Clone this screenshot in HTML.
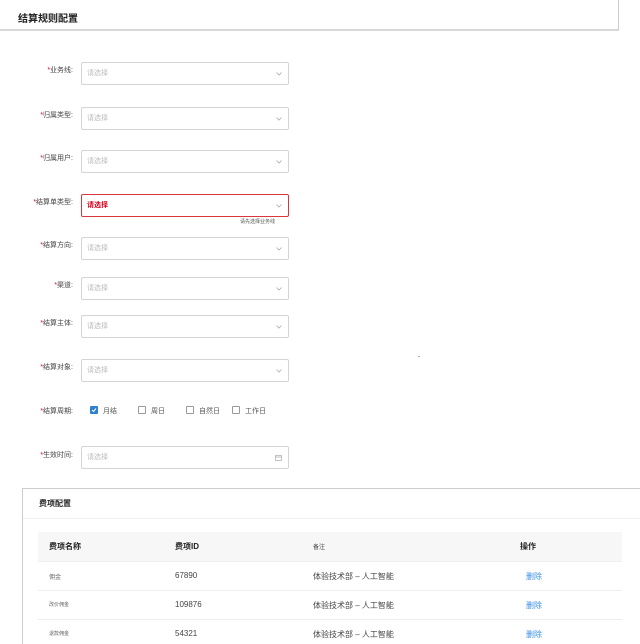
<!DOCTYPE html>
<html><head><meta charset="utf-8"><style>
*{margin:0;padding:0;box-sizing:border-box}
html,body{width:640px;height:644px;overflow:hidden}
body{background:#fff;position:relative;font-family:"Liberation Sans","Noto Sans CJK SC",sans-serif;color:#333}
.a{position:absolute;white-space:nowrap}
.hdr{position:absolute;left:0;top:0;width:619px;height:31px;border-right:1px solid #ccc;border-bottom:2px solid #d8d8d8}
.lab{position:absolute;right:567px;font-size:7px;color:#444}
.lab b{color:#d9001b;font-weight:normal}
.inp{position:absolute;left:81px;width:208px;height:23px;border:1px solid #d4d4d4;border-radius:2px;font-size:7px;line-height:21px;color:#bbb;padding-left:5px}
.inp.err{border-color:#d9363e;color:#d9001b;font-weight:bold}
.inp svg{position:absolute;right:6px;top:9px}
.cb{position:absolute;top:406px;width:8px;height:8px;border:1px solid #999;border-radius:1px}
.cbt{position:absolute;top:406px;font-size:7px;color:#555}
.card{position:absolute;left:22px;top:488px;width:630px;height:170px;border:1px solid #ccc;border-right:none}
.th{position:absolute;left:38px;top:532px;width:584px;height:29px;background:#f7f7f7}
.line{position:absolute;left:38px;width:584px;height:1px;background:#eee}
.t{position:absolute;font-size:8px;color:#444}
</style></head><body>
<div class="hdr"></div>
<div class="a" style="left:18px;top:10px;font-size:10px;font-weight:bold;color:#222">结算规则配置</div>

<div class="lab" style="top:65px"><b>*</b>业务线:</div>
<div class="inp" style="top:62px">请选择<svg width="6" height="4" viewBox="0 0 6 4"><path d="M.5.5 3 3 5.5.5" fill="none" stroke="#aaa" stroke-width=".8"/></svg></div>
<div class="lab" style="top:110px"><b>*</b>归属类型:</div>
<div class="inp" style="top:107px">请选择<svg width="6" height="4" viewBox="0 0 6 4"><path d="M.5.5 3 3 5.5.5" fill="none" stroke="#aaa" stroke-width=".8"/></svg></div>
<div class="lab" style="top:153px"><b>*</b>归属用户:</div>
<div class="inp" style="top:150px">请选择<svg width="6" height="4" viewBox="0 0 6 4"><path d="M.5.5 3 3 5.5.5" fill="none" stroke="#aaa" stroke-width=".8"/></svg></div>
<div class="lab" style="top:197px"><b>*</b>结算单类型:</div>
<div class="inp err" style="top:194px">请选择<svg width="6" height="4" viewBox="0 0 6 4"><path d="M.5.5 3 3 5.5.5" fill="none" stroke="#aaa" stroke-width=".8"/></svg></div>
<div class="a" style="left:240px;top:218px;font-size:5px;color:#555">请先选择业务线</div>
<div class="lab" style="top:240px"><b>*</b>结算方向:</div>
<div class="inp" style="top:237px">请选择<svg width="6" height="4" viewBox="0 0 6 4"><path d="M.5.5 3 3 5.5.5" fill="none" stroke="#aaa" stroke-width=".8"/></svg></div>
<div class="lab" style="top:280px"><b>*</b>渠道:</div>
<div class="inp" style="top:277px">请选择<svg width="6" height="4" viewBox="0 0 6 4"><path d="M.5.5 3 3 5.5.5" fill="none" stroke="#aaa" stroke-width=".8"/></svg></div>
<div class="lab" style="top:318px"><b>*</b>结算主体:</div>
<div class="inp" style="top:315px">请选择<svg width="6" height="4" viewBox="0 0 6 4"><path d="M.5.5 3 3 5.5.5" fill="none" stroke="#aaa" stroke-width=".8"/></svg></div>
<div class="lab" style="top:362px"><b>*</b>结算对象:</div>
<div class="inp" style="top:359px">请选择<svg width="6" height="4" viewBox="0 0 6 4"><path d="M.5.5 3 3 5.5.5" fill="none" stroke="#aaa" stroke-width=".8"/></svg></div>
<div class="a" style="left:418px;top:356px;width:2px;height:1px;background:#aaa"></div>

<div class="lab" style="top:406px"><b>*</b>结算周期:</div>
<div class="cb" style="left:90px;background:#2f7fd0;border-color:#2f7fd0"><svg width="6" height="6" viewBox="0 0 6 6" style="position:absolute;left:0;top:0"><path d="M1 3 2.5 4.5 5 1.5" fill="none" stroke="#fff" stroke-width="1"/></svg></div>
<div class="cbt" style="left:103px">月结</div>
<div class="cb" style="left:138px"></div><div class="cbt" style="left:151px">周日</div>
<div class="cb" style="left:186px"></div><div class="cbt" style="left:199px">自然日</div>
<div class="cb" style="left:232px"></div><div class="cbt" style="left:245px">工作日</div>

<div class="lab" style="top:450px"><b>*</b>生效时间:</div>
<div class="inp" style="top:446px">请选择<svg width="7" height="6" viewBox="0 0 7 6" style="top:8px"><rect x=".5" y=".5" width="6" height="5" fill="none" stroke="#aaa" stroke-width=".7"/><path d="M.5 2h6" stroke="#aaa" stroke-width=".7"/></svg></div>

<div class="card"></div>
<div class="a" style="left:39px;top:498px;font-size:8px;font-weight:bold;color:#222">费项配置</div>
<div class="a" style="left:23px;top:518px;width:617px;height:1px;background:#f0f0f0"></div>
<div class="th"></div>
<div class="t" style="left:49px;top:541px;font-weight:bold;color:#222">费项名称</div>
<div class="t" style="left:175px;top:541px;font-weight:bold;color:#222">费项ID</div>
<div class="t" style="left:313px;top:542px;font-size:6px">备注</div>
<div class="t" style="left:520px;top:541px;font-weight:bold;color:#222">操作</div>
<div class="line" style="top:561px"></div>
<div class="line" style="top:590px"></div>
<div class="line" style="top:619px"></div>

<div class="t" style="left:49px;top:572px;font-size:6px;color:#666">佣金</div>
<div class="t" style="left:175px;top:571px">67890</div>
<div class="t" style="left:313px;top:571px">体验技术部 – 人工智能</div>
<div class="t" style="left:526px;top:571px;color:#3a8ee6">删除</div>

<div class="t" style="left:49px;top:601px;font-size:5px;color:#666">改价佣金</div>
<div class="t" style="left:175px;top:600px">109876</div>
<div class="t" style="left:313px;top:600px">体验技术部 – 人工智能</div>
<div class="t" style="left:526px;top:600px;color:#3a8ee6">删除</div>

<div class="t" style="left:49px;top:630px;font-size:5px;color:#666">退款佣金</div>
<div class="t" style="left:175px;top:629px">54321</div>
<div class="t" style="left:313px;top:629px">体验技术部 – 人工智能</div>
<div class="t" style="left:526px;top:629px;color:#3a8ee6">删除</div>
</body></html>
